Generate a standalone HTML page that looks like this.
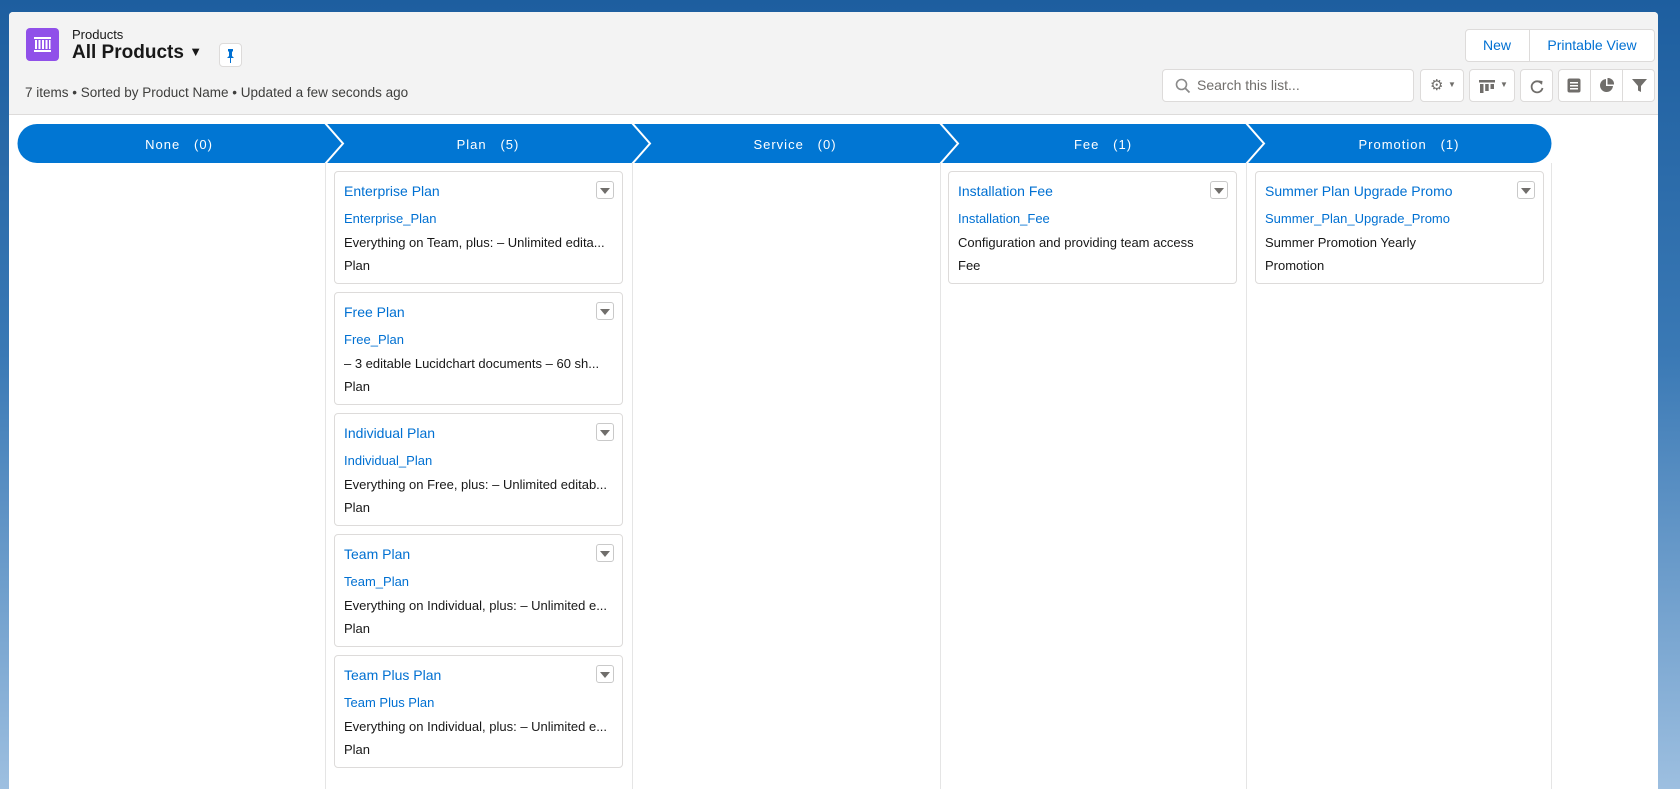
<!DOCTYPE html>
<html style="width:1680px;height:789px;overflow:hidden;background:#2a6aa8"><head><meta charset="utf-8"><style>
*{box-sizing:border-box;margin:0;padding:0}
body{width:1680px;height:789px;overflow:hidden;font-family:"Liberation Sans",Arial,sans-serif;background:linear-gradient(180deg,#1d5e9f 0%,#3a79b5 45%,#9dbfe0 100%);position:relative}
.panel{position:absolute;left:9px;top:12px;width:1649px;height:777px;background:#fff;border-radius:4px 4px 0 0;overflow:hidden}
.hdr{position:absolute;left:0;top:0;width:100%;height:103px;background:#f3f3f3;border-bottom:1px solid #dddbda}
.abs{position:absolute}
.btn{position:absolute;background:#fff;border:1px solid #dddbda;border-radius:4px}
.card{position:absolute;width:289px;height:113px;border:1px solid #dddbda;border-radius:4px;background:#fff}
.card .t{position:absolute;left:9px;top:11px;font-size:14px;color:#0070d2}
.card .a{position:absolute;left:9px;top:39px;font-size:13px;color:#0070d2}
.card .d{position:absolute;left:9px;top:63px;font-size:13px;color:#181818;white-space:nowrap}
.card .p{position:absolute;left:9px;top:86px;font-size:13px;color:#181818}
.card .dd{position:absolute;right:8px;top:9px;width:18px;height:18px;border:1px solid #c9c9c9;border-radius:3px;background:#fff}
.card .dd:after{content:"";position:absolute;left:3px;top:6px;border-left:5px solid transparent;border-right:5px solid transparent;border-top:6px solid #706e6b}
.vl{position:absolute;top:151px;width:1px;height:640px;background:#e5e5e5}
.lbl{position:absolute;top:125px;font-size:13px;color:#fff;letter-spacing:1px;text-align:center;width:300px}
</style></head><body>
<div class="panel">
 <div class="hdr">
  <div class="abs" style="left:17px;top:16px;width:33px;height:33px;background:#9050e9;border-radius:4px">
   <svg width="33" height="33" viewBox="0 0 33 33"><rect x="8" y="9" width="17" height="2" fill="#fff"/><rect x="8" y="22" width="17" height="2" fill="#fff"/><g fill="#fff"><rect x="9" y="12" width="2" height="9"/><rect x="12.5" y="12" width="2" height="9"/><rect x="16" y="12" width="2" height="9"/><rect x="19.5" y="12" width="2" height="9"/><rect x="23" y="12" width="1.5" height="9"/></g></svg>
  </div>
  <div class="abs" style="left:63px;top:15px;font-size:13px;color:#181818">Products</div>
  <div class="abs" style="left:63px;top:30px;font-size:19px;font-weight:bold;color:#181818">All Products <span style="font-size:13px;vertical-align:2px">▼</span></div>
  <div class="btn" style="left:210px;top:31px;width:23px;height:24px"><svg width="21" height="22" viewBox="0 0 21 22"><path d="M8 5h5v2l-1 1v4l2 2H7l2-2V8L8 7z M10 14h1v5h-1z" fill="#0070d2"/></svg></div>
  <div class="abs" style="left:16px;top:73px;font-size:13.5px;color:#3e3e3c">7 items • Sorted by Product Name • Updated a few seconds ago</div>
  <div class="btn" style="left:1456px;top:17px;width:190px;height:33px"></div>
  <div class="abs" style="left:1520px;top:17px;width:1px;height:33px;background:#dddbda"></div>
  <div class="abs" style="left:1456px;top:25px;width:64px;text-align:center;font-size:14px;color:#0070d2">New</div>
  <div class="abs" style="left:1520px;top:25px;width:126px;text-align:center;font-size:14px;color:#0070d2">Printable View</div>
  <div class="btn" style="left:1153px;top:57px;width:252px;height:33px"></div>
  <svg class="abs" style="left:1166px;top:66px" width="16" height="16" viewBox="0 0 16 16"><circle cx="6.5" cy="6.5" r="5" fill="none" stroke="#8a8a8a" stroke-width="1.6"/><path d="M10 10l4.5 4.5" stroke="#8a8a8a" stroke-width="1.8"/></svg>
  <div class="abs" style="left:1188px;top:65px;font-size:14px;color:#706e6b">Search this list...</div>
  <div class="btn" style="left:1411px;top:57px;width:44px;height:33px"><span class="abs" style="left:9px;top:6px;font-size:15px;color:#706e6b">⚙</span><span class="abs" style="left:27px;top:10px;font-size:8px;color:#706e6b">▼</span></div>
  <div class="btn" style="left:1460px;top:57px;width:46px;height:33px"><svg class="abs" style="left:9px;top:10px" width="16" height="13" viewBox="0 0 16 13"><rect x="0" y="0" width="16" height="2.5" fill="#706e6b"/><rect x="1" y="4" width="3.5" height="9" fill="#706e6b"/><rect x="6.2" y="4" width="3.5" height="7" fill="#706e6b"/><rect x="11.5" y="4" width="3.5" height="5" fill="#706e6b"/></svg><span class="abs" style="left:30px;top:10px;font-size:8px;color:#706e6b">▼</span></div>
  <div class="btn" style="left:1511px;top:57px;width:33px;height:33px"><svg class="abs" style="left:8px;top:8px" width="16" height="16" viewBox="0 0 16 16"><path d="M12.5 5.5A5.5 5.5 0 1 0 13.5 10" fill="none" stroke="#706e6b" stroke-width="1.8"/><path d="M9.5 2.5l4 0.5-0.5 4z" fill="#706e6b"/></svg></div>
  <div class="btn" style="left:1549px;top:57px;width:97px;height:33px"></div>
  <div class="abs" style="left:1581px;top:57px;width:1px;height:33px;background:#dddbda"></div>
  <div class="abs" style="left:1613px;top:57px;width:1px;height:33px;background:#dddbda"></div>
  <svg class="abs" style="left:1558px;top:66px" width="14" height="15" viewBox="0 0 14 15"><rect x="0.5" y="0.5" width="13" height="14" rx="2" fill="#706e6b"/><rect x="3" y="4" width="8" height="1.5" fill="#fff"/><rect x="3" y="7" width="8" height="1.5" fill="#fff"/><rect x="3" y="10" width="8" height="1.5" fill="#fff"/></svg>
  <svg class="abs" style="left:1590px;top:66px" width="15" height="15" viewBox="0 0 15 15"><path d="M7 1A6.5 6.5 0 1 0 14 8H7z" fill="#706e6b"/><path d="M8.5 0A6 6 0 0 1 15 6.5H8.5z" fill="#706e6b"/></svg>
  <svg class="abs" style="left:1623px;top:66px" width="15" height="15" viewBox="0 0 15 15"><path d="M0 1h15L9 8v6l-3-1.5V8z" fill="#706e6b"/></svg>
 </div>
 <svg class="abs" style="left:0;top:112px" width="1649" height="40" viewBox="0 0 1649 40">
  <path d="M28 0H1523a19.5 19.5 0 0 1 0 39H28a19.5 19.5 0 0 1 0-39z" fill="#0176d3"/>
  <g fill="none" stroke="#fff" stroke-width="2"><path d="M316 -1l18 20.5-18 20.5"/><path d="M623 -1l18 20.5-18 20.5"/><path d="M931 -1l18 20.5-18 20.5"/><path d="M1237 -1l18 20.5-18 20.5"/></g>
 </svg>
 <div class="lbl" style="left:20px">None&nbsp;&nbsp;&nbsp;(0)</div>
 <div class="lbl" style="left:329px">Plan&nbsp;&nbsp;&nbsp;(5)</div>
 <div class="lbl" style="left:636px">Service&nbsp;&nbsp;&nbsp;(0)</div>
 <div class="lbl" style="left:944px">Fee&nbsp;&nbsp;&nbsp;(1)</div>
 <div class="lbl" style="left:1250px">Promotion&nbsp;&nbsp;&nbsp;(1)</div>
 <div class="vl" style="left:316px"></div><div class="vl" style="left:623px"></div><div class="vl" style="left:931px"></div><div class="vl" style="left:1237px"></div><div class="vl" style="left:1542px"></div>
 <div class="card" style="left:325px;top:159px"><div class="t">Enterprise Plan</div><div class="dd"></div><div class="a">Enterprise_Plan</div><div class="d">Everything on Team, plus: – Unlimited edita...</div><div class="p">Plan</div></div>
 <div class="card" style="left:325px;top:280px"><div class="t">Free Plan</div><div class="dd"></div><div class="a">Free_Plan</div><div class="d">– 3 editable Lucidchart documents – 60 sh...</div><div class="p">Plan</div></div>
 <div class="card" style="left:325px;top:401px"><div class="t">Individual Plan</div><div class="dd"></div><div class="a">Individual_Plan</div><div class="d">Everything on Free, plus: – Unlimited editab...</div><div class="p">Plan</div></div>
 <div class="card" style="left:325px;top:522px"><div class="t">Team Plan</div><div class="dd"></div><div class="a">Team_Plan</div><div class="d">Everything on Individual, plus: – Unlimited e...</div><div class="p">Plan</div></div>
 <div class="card" style="left:325px;top:643px"><div class="t">Team Plus Plan</div><div class="dd"></div><div class="a">Team Plus Plan</div><div class="d">Everything on Individual, plus: – Unlimited e...</div><div class="p">Plan</div></div>
 <div class="card" style="left:939px;top:159px"><div class="t">Installation Fee</div><div class="dd"></div><div class="a">Installation_Fee</div><div class="d">Configuration and providing team access</div><div class="p">Fee</div></div>
 <div class="card" style="left:1246px;top:159px"><div class="t">Summer Plan Upgrade Promo</div><div class="dd"></div><div class="a">Summer_Plan_Upgrade_Promo</div><div class="d">Summer Promotion Yearly</div><div class="p">Promotion</div></div>
</div>
</body></html>
